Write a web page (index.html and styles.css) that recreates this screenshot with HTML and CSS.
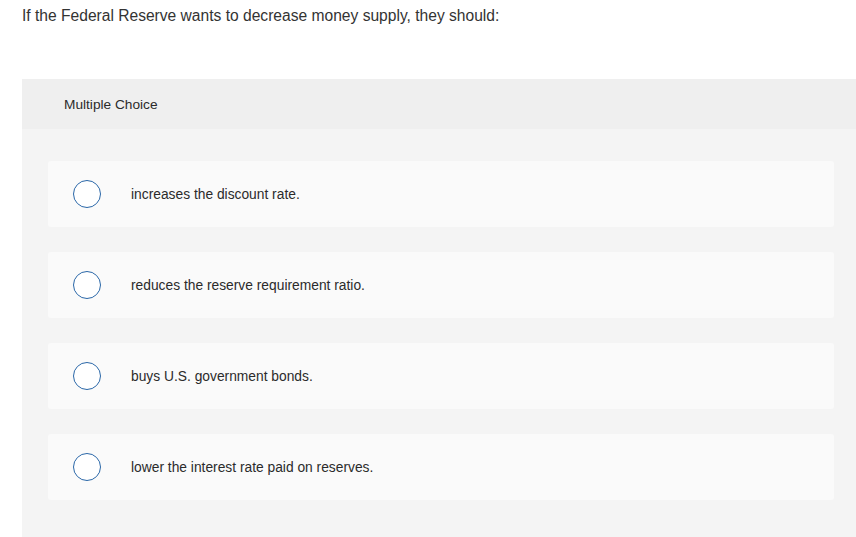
FILE: index.html
```html
<!DOCTYPE html>
<html>
<head>
<meta charset="utf-8">
<link rel="stylesheet" href="styles.css">
</head>
<body>
<p class="question">If the Federal Reserve wants to decrease money supply, they should:</p>
<section class="panel">
  <div class="panel-head">Multiple Choice</div>
  <ul class="choices">
    <li class="choice"><span class="radio"></span><span class="label">increases the discount rate.</span></li>
    <li class="choice"><span class="radio"></span><span class="label">reduces the reserve requirement ratio.</span></li>
    <li class="choice"><span class="radio"></span><span class="label">buys U.S. government bonds.</span></li>
    <li class="choice"><span class="radio"></span><span class="label">lower the interest rate paid on reserves.</span></li>
  </ul>
</section>
</body>
</html>
```
FILE: styles.css
```css
html, body {
  margin: 0;
  padding: 0;
  background: #ffffff;
}
body {
  font-family: "Liberation Sans", Arial, sans-serif;
  color: #333333;
  overflow: hidden;
}
.question {
  box-sizing: border-box;
  margin: 0;
  padding: 6px 0 0 22px;
  font-size: 15.6px;
  line-height: 20px;
  height: 79px;
}
.panel {
  margin-left: 22px;
  background: #f4f4f4;
  height: 480px;
}
.panel-head {
  height: 50px;
  background: #efefef;
  display: flex;
  align-items: center;
  padding-left: 42px;
  font-size: 13.7px;
  color: #2b2b2b;
}
.choices {
  list-style: none;
  margin: 0;
  padding: 32px 22px 0 26px;
  display: flex;
  flex-direction: column;
  gap: 25px;
}
.choice {
  height: 66px;
  background: #fafafa;
  border-radius: 3px;
  display: flex;
  align-items: center;
  padding-left: 25px;
  font-size: 13.8px;
  color: #2b2b2b;
}
.radio {
  width: 28px;
  height: 28px;
  box-sizing: border-box;
  border: 1.6px solid #2a67a8;
  border-radius: 50%;
  background: #ffffff;
  flex: none;
  margin-right: 30px;
}
```
